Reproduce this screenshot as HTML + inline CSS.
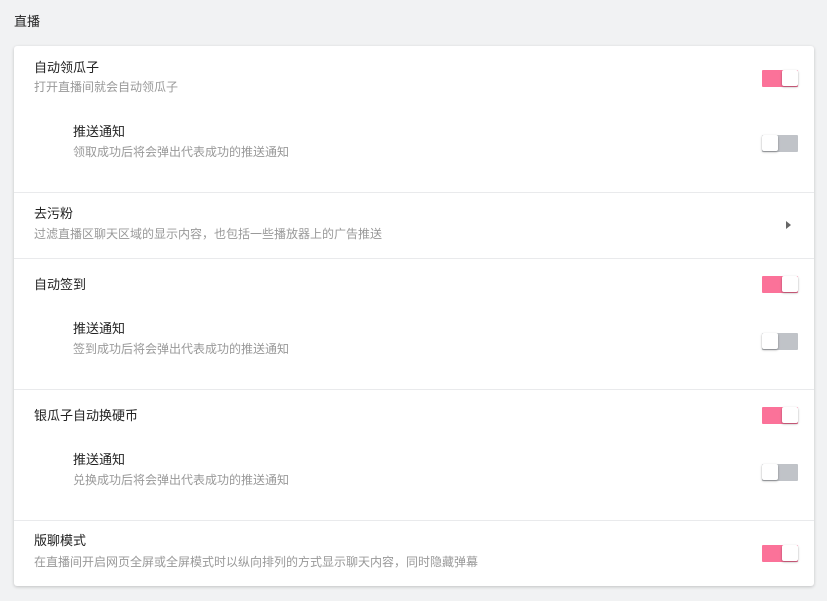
<!DOCTYPE html><html><head><meta charset="utf-8"><style>
body{margin:0;width:827px;height:601px;background:#f1f2f3;font-family:"Liberation Sans","Noto Sans CJK SC",sans-serif;position:relative;overflow:hidden}
.a{position:absolute;white-space:nowrap}
.h{left:14px;top:11px;font-size:13px;color:#222}
.card{position:absolute;left:14px;top:46px;width:800px;height:540px;background:#fff;border-radius:3px;box-shadow:0 1px 3px rgba(0,0,0,.2)}
.t{font-size:13px;color:#222;margin-top:-2px}
.d{font-size:12px;color:#999;margin-top:-2px}
.hr{position:absolute;left:0;width:800px;height:1px;background:#e9eaec}
.tg{position:absolute;left:748px;width:36px;height:17px}
.tg .tr{position:absolute;left:0;top:0;width:36px;height:17px;border-radius:1px}
.tg .k{position:absolute;top:0;width:16px;height:16px;background:#fff;border-radius:2px;box-shadow:0 1px 2px rgba(0,0,0,.35)}
.on .tr{background:#fb7299}.on .k{left:20px}
.off .tr{background:#c0c3c8}.off .k{left:0}
</style></head><body>
<div class="a h">直播</div>
<div class="card">
<div class="a t" style="left:20px;top:13px">自动领瓜子</div>
<div class="a d" style="left:20px;top:34px">打开直播间就会自动领瓜子</div>
<div class="tg on" style="top:24px"><div class="tr"></div><div class="k"></div></div>
<div class="a t" style="left:59px;top:77px">推送通知</div>
<div class="a d" style="left:59px;top:99px">领取成功后将会弹出代表成功的推送通知</div>
<div class="tg off" style="top:89px"><div class="tr"></div><div class="k"></div></div>
<div class="hr" style="top:146px"></div>
<div class="a t" style="left:20px;top:159px">去污粉</div>
<div class="a d" style="left:20px;top:181px">过滤直播区聊天区域的显示内容，也包括一些播放器上的广告推送</div>
<div class="a" style="left:772px;top:175px;width:0;height:0;border-left:5px solid #666;border-top:4px solid transparent;border-bottom:4px solid transparent"></div>
<div class="hr" style="top:212px"></div>
<div class="a t" style="left:20px;top:230px">自动签到</div>
<div class="tg on" style="top:230px"><div class="tr"></div><div class="k"></div></div>
<div class="a t" style="left:59px;top:274px">推送通知</div>
<div class="a d" style="left:59px;top:296px">签到成功后将会弹出代表成功的推送通知</div>
<div class="tg off" style="top:287px"><div class="tr"></div><div class="k"></div></div>
<div class="hr" style="top:343px"></div>
<div class="a t" style="left:20px;top:361px">银瓜子自动换硬币</div>
<div class="tg on" style="top:361px"><div class="tr"></div><div class="k"></div></div>
<div class="a t" style="left:59px;top:405px">推送通知</div>
<div class="a d" style="left:59px;top:427px">兑换成功后将会弹出代表成功的推送通知</div>
<div class="tg off" style="top:418px"><div class="tr"></div><div class="k"></div></div>
<div class="hr" style="top:474px"></div>
<div class="a t" style="left:20px;top:486px">版聊模式</div>
<div class="a d" style="left:20px;top:509px">在直播间开启网页全屏或全屏模式时以纵向排列的方式显示聊天内容，同时隐藏弹幕</div>
<div class="tg on" style="top:499px"><div class="tr"></div><div class="k"></div></div>
</div>
</body></html>
